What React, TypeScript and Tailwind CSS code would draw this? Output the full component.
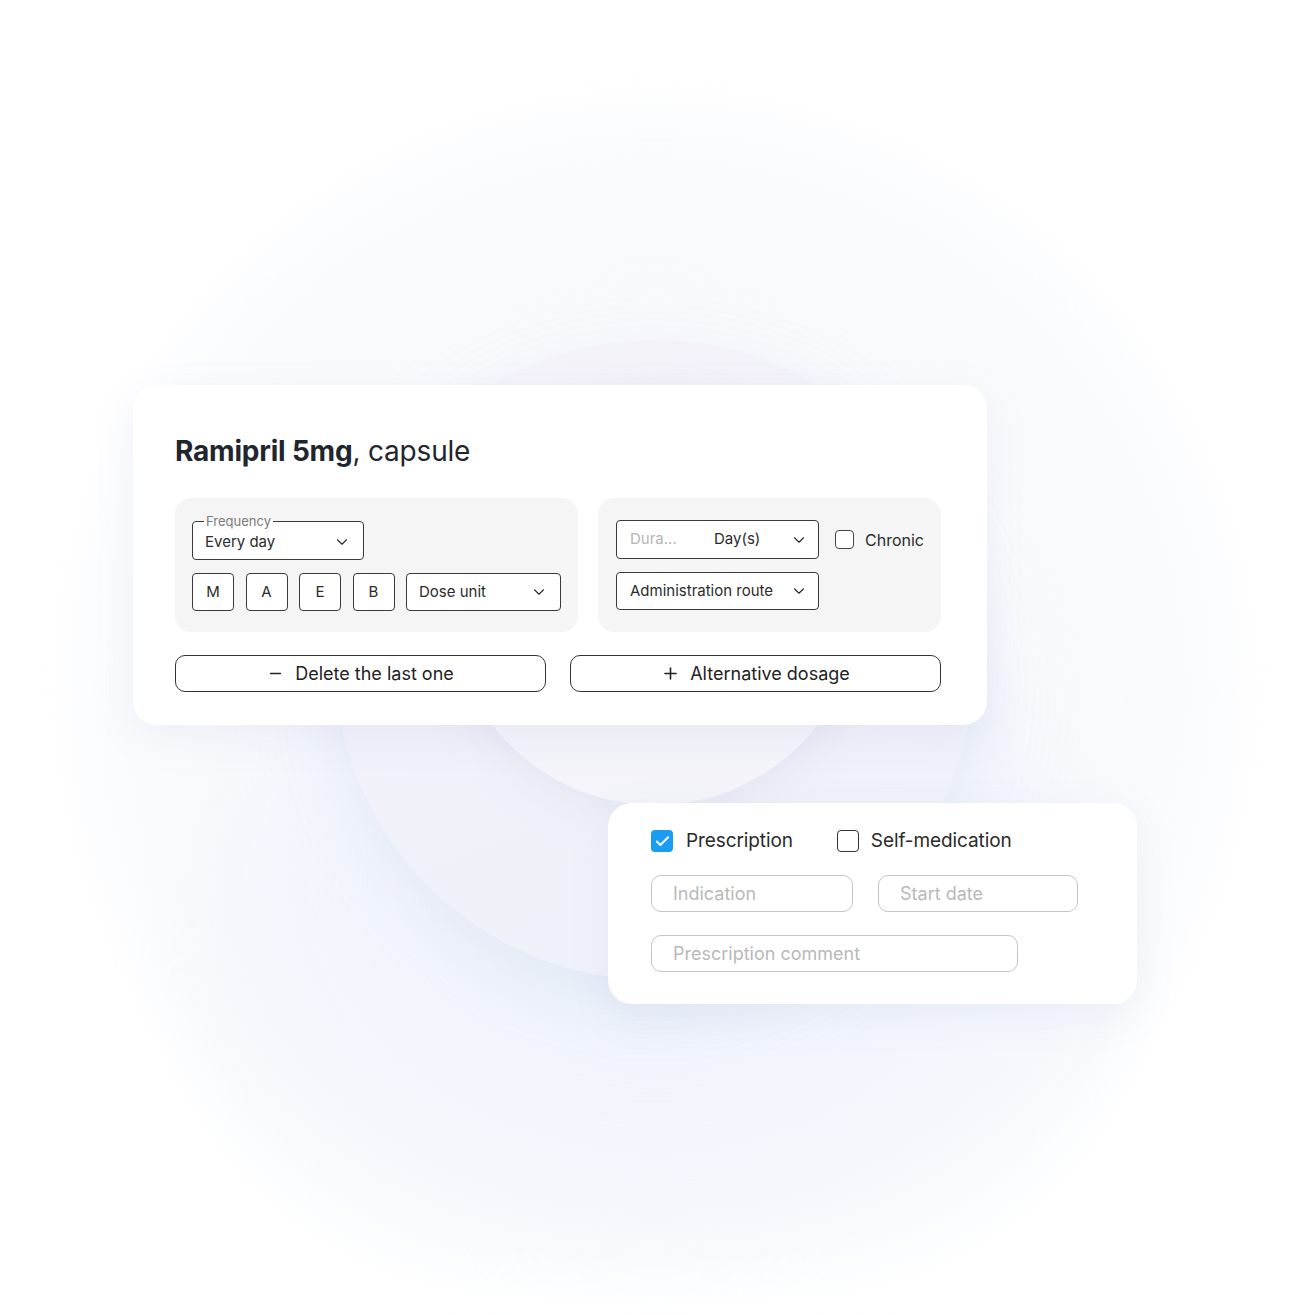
import { Check, ChevronDown, Minus, Plus } from "lucide-react";

const font = { fontFamily: "Inter, 'Noto Sans', sans-serif" };

function Chevron() {
    return <ChevronDown size={18} strokeWidth={1.5} className="text-[#2b2b2b] shrink-0" />;
}

function SlotBox({ letter }: { letter: string }) {
    return (
        <div className="w-[42px] h-[38px] flex items-center justify-center border border-[#3a3a3a] rounded-[4px] bg-white text-[15px] text-[#2b2b2b]">
            {letter}
        </div>
    );
}

function GhostInput({ placeholder, width }: { placeholder: string; width: string }) {
    return (
        <div className={`${width} h-[37px] flex items-center pl-[21px] border-[1.5px] border-[#c4c4c4] rounded-[10px] bg-white text-[18px] text-[#b9b9b9]`}>
            {placeholder}
        </div>
    );
}

function DosageCard() {
    return (
        <div className="w-[854px] bg-white rounded-[24px] shadow-[0_12px_40px_rgba(140,150,200,0.10)] pl-[42px] pr-[46px] pt-[48px] pb-[33px]">
            <h1 className="text-[28px] leading-[36px] text-[#1f262e] tracking-[-0.2px]">
                <span className="font-bold">Ramipril 5mg</span>, capsule
            </h1>

            <div className="flex gap-[20px] mt-[29px]">
                <div className="w-[403px] h-[134px] bg-[#f5f5f5] rounded-[16px] pl-[17px] pt-[16px]">
                    <fieldset className="w-[172px] h-[46px] border border-[#3a3a3a] rounded-[4px] bg-white px-[12px]">
                        <legend className="ml-[-1px] px-[2px] text-[13px] leading-[14px] text-[#7a7a7a]">Frequency</legend>
                        <div className="flex items-center justify-between h-[28px]">
                            <span className="text-[15px] text-[#2b2b2b]">Every day</span>
                            <Chevron />
                        </div>
                    </fieldset>
                    <div className="flex gap-[11.5px] mt-[13px]">
                        <SlotBox letter="M" />
                        <SlotBox letter="A" />
                        <SlotBox letter="E" />
                        <SlotBox letter="B" />
                        <div className="w-[155px] h-[38px] flex items-center justify-between pl-[12px] pr-[12px] border border-[#3a3a3a] rounded-[4px] bg-white">
                            <span className="text-[15px] text-[#2b2b2b]">Dose unit</span>
                            <Chevron />
                        </div>
                    </div>
                </div>

                <div className="w-[343px] h-[134px] bg-[#f5f5f5] rounded-[16px] pl-[18px] pt-[22px]">
                    <div className="flex items-center">
                        <div className="w-[203px] h-[39px] flex items-center pl-[13px] pr-[10px] border border-[#3a3a3a] rounded-[4px] bg-white">
                            <span className="w-[84px] text-[15px] text-[#b5b5b5]">Dura...</span>
                            <span className="flex-1 text-[15px] text-[#2b2b2b]">Day(s)</span>
                            <Chevron />
                        </div>
                        <div className="ml-[16px] w-[19px] h-[19px] border-[1.5px] border-[#444] rounded-[4px] bg-white" />
                        <span className="ml-[11px] text-[16px] text-[#2b2b2b]">Chronic</span>
                    </div>
                    <div className="w-[203px] h-[38px] mt-[13px] flex items-center justify-between pl-[13px] pr-[10px] border border-[#3a3a3a] rounded-[4px] bg-white">
                        <span className="text-[15px] text-[#2b2b2b]">Administration route</span>
                        <Chevron />
                    </div>
                </div>
            </div>

            <div className="flex gap-[24px] mt-[23px]">
                <button className="w-[372px] h-[37px] flex items-center justify-center gap-[11px] border-[1.5px] border-[#333] rounded-[10px] bg-white text-[18px] text-[#222]">
                    <Minus size={17} strokeWidth={2} />
                    Delete the last one
                </button>
                <button className="w-[372px] h-[37px] flex items-center justify-center gap-[10px] border-[1.5px] border-[#333] rounded-[10px] bg-white text-[18px] text-[#222]">
                    <Plus size={19} strokeWidth={2} />
                    Alternative dosage
                </button>
            </div>
        </div>
    );
}

function PrescriptionCard() {
    return (
        <div className="w-[529px] bg-white rounded-[24px] shadow-[0_12px_40px_rgba(140,150,200,0.10)] pl-[43px] pt-[26px] pb-[32px]">
            <div className="flex items-center h-[24px]">
                <div className="w-[22px] h-[22px] rounded-[4px] bg-[#1a9cf3] flex items-center justify-center">
                    <Check size={17} strokeWidth={2.75} className="text-white" />
                </div>
                <span className="ml-[13px] text-[19px] text-[#2a2a2a] tracking-[-0.1px]">Prescription</span>
                <div className="ml-[44px] w-[22px] h-[22px] rounded-[4px] border-[1.5px] border-[#333] bg-white" />
                <span className="ml-[12px] text-[19px] text-[#2a2a2a] tracking-[-0.1px]">Self-medication</span>
            </div>
            <div className="flex gap-[25px] mt-[22px]">
                <GhostInput placeholder="Indication" width="w-[202px]" />
                <GhostInput placeholder="Start date" width="w-[200px]" />
            </div>
            <div className="mt-[23px]">
                <GhostInput placeholder="Prescription comment" width="w-[367px]" />
            </div>
        </div>
    );
}

export default function App() {
    return (
        <div className="relative w-[1315px] h-[1315px] overflow-hidden bg-white" style={font}>
            {/* soft background rings */}
            <div className="absolute left-[70px] top-[105px] w-[1170px] h-[1170px] rounded-full bg-[radial-gradient(circle,rgba(243,244,251,0.8)_0%,rgba(244,246,252,0.55)_55%,rgba(247,249,253,0.3)_78%,rgba(255,255,255,0)_100%)] blur-[24px]" />
            <div className="absolute left-[180px] top-[640px] w-[950px] h-[630px] rounded-full bg-[radial-gradient(ellipse_at_50%_40%,rgba(232,239,250,0.7)_0%,rgba(236,242,251,0.45)_50%,rgba(255,255,255,0)_100%)] blur-[30px]" />
            <div className="absolute left-[335px] top-[340px] w-[640px] h-[640px] rounded-full bg-[linear-gradient(160deg,#f5f3fa_0%,#f0f1f9_55%,#eef2fa_100%)] shadow-[0_20px_60px_rgba(200,210,235,0.3)]" />
            <div className="absolute left-[450px] top-[395px] w-[410px] h-[410px] rounded-full bg-[#f4f4fa] shadow-[0_10px_40px_rgba(200,205,230,0.3)]" />

            <div className="relative pt-[385px]">
                <div className="ml-[133px]">
                    <DosageCard />
                </div>
                <div className="ml-[608px] mt-[78px]">
                    <PrescriptionCard />
                </div>
            </div>
        </div>
    );
}
